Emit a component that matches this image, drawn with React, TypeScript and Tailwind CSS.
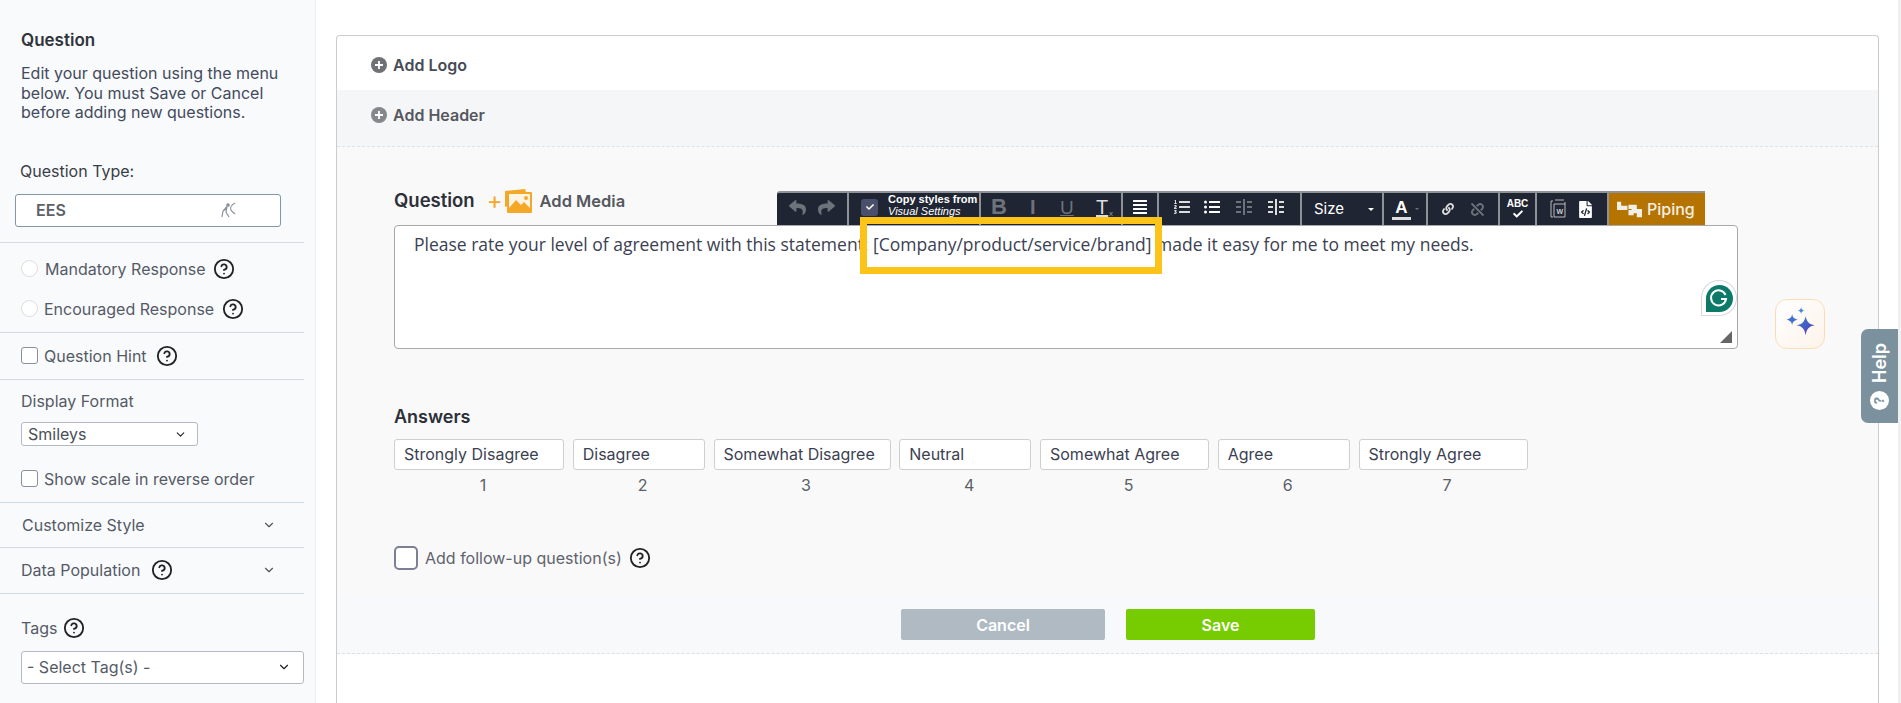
import React from 'react';
import { ChevronDown, CircleHelp } from 'lucide-react';
import {
  FaReply,
  FaShare,
  FaAlignJustify,
  FaListOl,
  FaListUl,
  FaLink,
  FaUnlink,
  FaCheck,
  FaFileCode,
} from 'react-icons/fa';

const Help = ({ className = '' }: { className?: string }) => (
  <CircleHelp className={`w-[22px] h-[22px] text-[#222] ${className}`} strokeWidth={2} />
);

const Radio = () => <span className="w-[17px] h-[17px] rounded-full bg-white border border-[#dcdcdc]" />;
const Check = () => <span className="w-[17px] h-[17px] rounded-[3px] bg-white border border-[#8a8f99]" />;
const Divider = () => <div className="h-px w-[304px] bg-[#d3dae0]" />;

function AddRow({ label, dim, className = '' }: { label: string; dim?: boolean; className?: string }) {
  return (
    <div className={`flex items-center gap-[6px] pl-[34px] text-[16px] font-semibold ${dim ? 'text-[#55585e]' : 'text-[#474b55]'} ${className}`}>
      <span className={`w-[16px] h-[16px] rounded-full flex items-center justify-center text-white ${dim ? 'bg-[#85878b]' : 'bg-[#6f7175]'}`}>
        <svg width="10" height="10" viewBox="0 0 10 10"><path d="M5 1v8M1 5h8" stroke="currentColor" strokeWidth="1.8" /></svg>
      </span>
      {label}
    </div>
  );
}

function Sidebar() {
  return (
    <aside className="w-[316px] h-[703px] shrink-0 bg-[#f9fafc] border-r border-[#eceef1] text-[16px] text-[#555b66]">
      <div className="pl-[21px] pt-[29px]">
        <h2 className="text-[17px] leading-[22px] font-semibold text-[#30343b]">Question</h2>
        <p className="mt-[13px] leading-[19.5px] text-[#434a5c] w-[270px]">
          Edit your question using the menu below. You must Save or Cancel before adding new questions.
        </p>
        <div className="mt-[37px] text-[#3a3e47] leading-[22px] -ml-[1px]">Question Type:</div>
      </div>
      <div className="ml-[15px] mt-[12px] w-[266px] h-[33px] bg-white border border-[#7f99a8] rounded-[3px] flex items-center pl-[20px] pr-[44px] justify-between font-semibold text-[#5d6068]">
        EES
        <svg width="16" height="17" viewBox="0 0 16 17" fill="none" stroke="#8b9299" strokeWidth="1.2">
          <circle cx="8" cy="3" r="1.2" fill="#8b9299" />
          <path d="M7 4.500 3 9l-1 6M7 5l-1 5 3 5M6 7l-3 2M15 1C11 3 10 6 11 8c1 2 3 3 4 4" />
        </svg>
      </div>
      <div className="mt-[15px]"><Divider /></div>
      <div className="pl-[21px] h-[89px] pt-[6px] flex flex-col">
        <div className="h-[40px] flex items-center gap-[7px]"><Radio />Mandatory Response<Help /></div>
        <div className="h-[40px] flex items-center gap-[6px]"><Radio />Encouraged Response<Help className="ml-[2px]" /></div>
      </div>
      <Divider />
      <div className="pl-[21px] h-[46px] flex items-center gap-[6px]"><Check />Question Hint<Help className="ml-[3px]" /></div>
      <Divider />
      <div className="pl-[21px] pt-[11px] h-[122px]">
        <div className="leading-[21px]">Display Format</div>
        <div className="mt-[10px] w-[177px] h-[24px] bg-white border border-[#b3bac4] rounded-[3px] pl-[6px] pr-[10px] flex items-center justify-between text-[#4a4e57]">
          Smileys
          <ChevronDown className="w-[13px] h-[13px] text-[#222] mt-[2px]" />
        </div>
        <div className="mt-[21px] flex items-center gap-[6px]"><Check />Show scale in reverse order</div>
      </div>
      <Divider />
      <div className="pl-[22px] pr-[28px] w-[304px] h-[44px] flex items-center justify-between">
        Customize Style
        <ChevronDown className="w-[14px] h-[14px] text-[#555]" />
      </div>
      <Divider />
      <div className="pl-[21px] pr-[28px] w-[304px] h-[45px] flex items-center justify-between">
        <span className="flex items-center gap-[11px]">Data Population<Help /></span>
        <ChevronDown className="w-[14px] h-[14px] text-[#555]" />
      </div>
      <Divider />
      <div className="pl-[21px] pt-[23px]">
        <div className="flex items-center gap-[6px] h-[22px]">Tags<Help /></div>
        <div className="mt-[12px] w-[283px] h-[33px] bg-white border border-[#b3bac4] rounded-[3px] pl-[5px] pr-[12px] flex items-center justify-between">
          - Select Tag(s) -
          <ChevronDown className="w-[14px] h-[14px] text-[#222]" />
        </div>
      </div>
    </aside>
  );
}

const Group = ({ w, children, className = '' }: { w: string; children: React.ReactNode; className?: string }) => (
  <div className={`h-full pb-[4px] flex items-center shrink-0 border-r-2 border-[#8f9296] ${w} ${className}`}>{children}</div>
);

function Toolbar() {
  return (
    <div className="absolute left-[383px] -top-[34px] w-[928px] h-[34px] flex bg-[#1f2533] border-t-2 border-[#8f9296] rounded-tl-[3px] font-['Liberation_Sans',sans-serif]">
      <Group w="w-[72px]" className="justify-around px-[6px] text-[#6d727b]">
        <FaReply size={17} />
        <FaShare size={17} />
      </Group>
      <Group w="w-[132px]" className="pl-[12px]">
        <span className="w-[17px] h-[17px] rounded-[3px] bg-[#4a506b] flex items-center justify-center text-white">
          <FaCheck size={8} />
        </span>
        <div className="ml-[10px] text-[11px] leading-[12px] font-bold text-white -mt-[4px] whitespace-nowrap">
          Copy styles from<br /><span className="italic font-normal">Visual Settings</span>
        </div>
      </Group>
      <Group w="w-[142px]" className="relative text-[#6d727b]">
        <span className="absolute left-[10px] text-[22px] font-bold leading-none">B</span>
        <span className="absolute left-[49px] text-[20px] font-bold leading-none">I</span>
        <span className="absolute left-[79px] text-[19px] leading-none underline">U</span>
        <span className="absolute left-[115px] text-[20px] leading-none text-[#ddd] underline">T</span>
        <span className="absolute left-[128px] top-[17px] text-[8px] leading-none text-[#999]">x</span>
      </Group>
      <Group w="w-[36px]" className="justify-center text-white"><FaAlignJustify size={16} /></Group>
      <Group w="w-[143px]" className="justify-around px-[8px]">
        <FaListOl size={16} className="text-[#ddd]" />
        <FaListUl size={16} className="text-white" />
        <svg width="18" height="16" viewBox="0 0 18 16" className="text-[#6d727b]" stroke="currentColor" strokeWidth="2">
          <path d="M9 0v16M1 3h5M1 8h5M1 13h5M12 3h5M12 8h5M12 13h5" />
        </svg>
        <svg width="18" height="16" viewBox="0 0 18 16" className="text-[#ddd]" stroke="currentColor" strokeWidth="2">
          <path d="M9 0v16M1 3h5M1 8h5M1 13h5M12 3h5M12 8h5M12 13h5" />
        </svg>
      </Group>
      <Group w="w-[82px]" className="pl-[12px] pr-[8px] !pb-0 justify-between text-white text-[15px] font-['Inter',sans-serif]">
        Size
        <span className="w-0 h-0 border-x-[3px] border-x-transparent border-t-[3px] border-t-white" />
      </Group>
      <Group w="w-[44px]" className="pl-[8px] gap-[4px] !pb-0">
        <span className="w-[19px] border-b-[3px] border-[#ddd] text-white font-bold text-[17px] leading-[18px] text-center">A</span>
        <span className="w-0 h-0 border-x-[2px] border-x-transparent border-t-[2px] border-t-[#6d727b]" />
      </Group>
      <Group w="w-[72px]" className="justify-around px-[6px] !pb-0">
        <FaLink size={12} className="text-[#ddd]" />
        <FaUnlink size={13} className="text-[#6d727b]" />
      </Group>
      <Group w="w-[37px]" className="flex-col justify-center text-white !pb-0">
        <span className="text-[10px] font-bold leading-[10px]">ABC</span>
        <FaCheck size={10} />
      </Group>
      <Group w="w-[72px]" className="justify-around px-[8px] !pb-0">
        <svg width="18" height="20" viewBox="0 0 18 20" fill="none" stroke="#bbb">
          <path d="M3 2H1v16h2M5 1h9M15 3v15H4V5h11" />
          <text x="6.500" y="15" fontSize="7" fontWeight="700" fill="#ccc" stroke="none">W</text>
        </svg>
        <FaFileCode size={17} className="text-white" />
      </Group>
      <div className="flex-1 h-full bg-[#b57300] flex items-center gap-[5px] pl-[8px] text-[#f3efe6] text-[16px] font-['Inter',sans-serif] font-medium">
        <svg width="25" height="17" viewBox="0 0 24 15" fill="currentColor">
          <path d="M0 0h4v4h6v4H0zM11 3h8v4h5v8h-5v-4h-3v2h-5V8h3V7h-3z" />
        </svg>
        Piping
      </div>
    </div>
  );
}

const answers = [
  { text: 'Strongly Disagree', w: 'w-[170px]' },
  { text: 'Disagree', w: 'w-[132px]' },
  { text: 'Somewhat Disagree', w: 'w-[177px]' },
  { text: 'Neutral', w: 'w-[132px]' },
  { text: 'Somewhat Agree', w: 'w-[169px]' },
  { text: 'Agree', w: 'w-[132px]' },
  { text: 'Strongly Agree', w: 'w-[169px]' },
];

function Editor() {
  return (
    <div className="relative mt-[12px] w-[1344px] h-[124px]">
      <div className="h-full bg-white border border-[#a9a9a9] rounded-[4px] pl-[19px] pt-[6px] text-[17.500px] leading-[24px] text-[#3b4152] font-['Open_Sans',sans-serif] whitespace-nowrap">
        Please rate your level of agreement with this statement: [Company/product/service/brand] made it easy for me to meet my needs.
      </div>
      <Toolbar />
      <div className="absolute left-[466px] -top-[8px] w-[302px] h-[57px] border-[7px] border-[#fcc419]" />
      <div className="absolute right-[1px] top-[55px] w-[36px] h-[36px] rounded-full rounded-bl-[3px] bg-white border border-[#d5d9e4] flex items-center justify-center">
        <div className="w-[27px] h-[27px] rounded-full rounded-bl-none bg-[#0b7a68] flex items-center justify-center">
          <svg width="20" height="20" viewBox="0 0 20 20" fill="none" stroke="#fff" strokeWidth="2">
            <path d="M16.500 7A7.500 7.500 0 1 0 17 11h-5" />
          </svg>
        </div>
      </div>
      <div className="absolute right-[6px] bottom-[6px] w-0 h-0 border-l-[12px] border-l-transparent border-b-[12px] border-b-[#666]" />
      <div className="absolute left-[1381px] top-[74px] w-[50px] h-[50px] rounded-[12px] border border-[#fbdcb9] bg-gradient-to-br from-white to-[#fdf3ea] flex items-center justify-center">
        <svg width="36" height="36" viewBox="0 0 32 32">
          <defs>
            <linearGradient id="spark" x1="0" y1="0" x2="1" y2="1">
              <stop offset="0" stopColor="#2f8ad6" />
              <stop offset="1" stopColor="#5b2fb0" />
            </linearGradient>
          </defs>
          <path d="M21 9c1 5 3 7 8 8-5 1-7 3-8 9-1-6-3-8-8-9 5-1 7-3 8-8z" fill="url(#spark)" />
          <path d="M9 7c.5 3 1.500 4 5 5-3.500 1-4.500 2-5 5-.5-3-1.500-4-5-5 3.500-1 4.500-2 5-5z" fill="#3f6fd0" />
          <path d="M17 1c.3 1.800 1 2.500 3 3-2 .5-2.700 1.200-3 3-.3-1.800-1-2.500-3-3 2-.5 2.700-1.200 3-3z" fill="#3f8ad6" />
        </svg>
      </div>
    </div>
  );
}

function Panel() {
  return (
    <div className="mt-[35px] ml-[20px] w-[1543px] h-[668px] border border-b-0 border-[#cccccc] rounded-t-[4px] bg-white">
      <div className="h-[54px] flex items-center"><AddRow label="Add Logo" className="mt-[4px]" /></div>
      <div className="h-[56px] flex items-center bg-[#f5f6f8]"><AddRow label="Add Header" dim className="-mt-[6px]" /></div>
      <div className="border-t border-dashed border-[#dde1ec] h-[450px] bg-[#f9f9f9] pl-[57px] pt-[42px]">
        <div className="h-[24px] flex items-center">
          <span className="text-[18.500px] font-semibold text-[#2c3038]">Question</span>
          <span className="ml-[12px] text-[24px] leading-none text-[#f5a828]">+</span>
          <svg width="28" height="25" viewBox="0 0 28 25" className="ml-[1px]">
            <path d="M1 2l20-2 1 3H4v14l-3 1z" fill="#f5a828" />
            <rect x="3" y="3" width="25" height="21" rx="1" fill="#f5a828" />
            <rect x="5" y="5" width="21" height="14" fill="#fdf4e3" />
            <path d="M5 19l7-8 5 5 3-3 6 6z" fill="#f5a828" />
            <circle cx="22" cy="9" r="2" fill="#f5a828" />
          </svg>
          <span className="ml-[8px] text-[16.500px] font-semibold text-[#55585e]">Add Media</span>
        </div>
        <Editor />
        <div className="mt-[57px] h-[20px] flex items-center text-[18px] font-semibold text-[#2c3038]">Answers</div>
        <div className="mt-[13px] flex gap-[8.750px]">
          {answers.map((a, i) => (
            <div key={a.text} className={`${a.w} shrink-0`}>
              <div className="h-[31px] bg-white border border-[#cfcfcf] rounded-[3px] pl-[9px] pb-[2px] flex items-center text-[16px] text-[#3b4152] whitespace-nowrap">{a.text}</div>
              <div className="mt-[5px] h-[20px] pl-[8px] text-center text-[16px] leading-[20px] text-[#5a5f68]">{i + 1}</div>
            </div>
          ))}
        </div>
        <div className="mt-[51px] h-[24px] flex items-center text-[16px] text-[#5f636d]">
          <span className="w-[24px] h-[24px] rounded-[5px] bg-white border-2 border-[#7b8093]" />
          <span className="ml-[7px]">Add follow-up question(s)</span>
          <Help className="ml-[7px]" />
        </div>
      </div>
      <div className="h-[58px] bg-[#f8f9fb] border-b border-dashed border-[#e0e0e0] flex items-center pl-[564px] gap-[21px] text-white font-semibold text-[16px]">
        <div className="w-[204px] h-[31px] rounded-[2px] bg-[#b0bac3] flex items-center justify-center">Cancel</div>
        <div className="w-[189px] h-[31px] rounded-[2px] bg-[#76cc00] flex items-center justify-center">Save</div>
      </div>
    </div>
  );
}

export default function App() {
  return (
    <div className="relative h-[703px] w-[1901px] overflow-hidden flex bg-white font-['Inter',sans-serif]">
      <Sidebar />
      <Panel />
      <div className="absolute right-[3px] top-[329px] w-[37px] h-[94px] bg-[#7b929e] rounded-l-[7px] flex flex-col-reverse items-center justify-start gap-[8px] pb-[13px] text-white">
        <span className="w-[19px] h-[19px] rounded-full bg-white text-[#7b929e] text-[13px] font-bold leading-none flex items-center justify-center -rotate-90">?</span>
        <span className="[writing-mode:vertical-rl] rotate-180 text-[18px] font-semibold leading-none">Help</span>
      </div>
      <div className="absolute right-0 top-0 w-[3px] h-[703px] bg-[#f0f0f0]" />
    </div>
  );
}
